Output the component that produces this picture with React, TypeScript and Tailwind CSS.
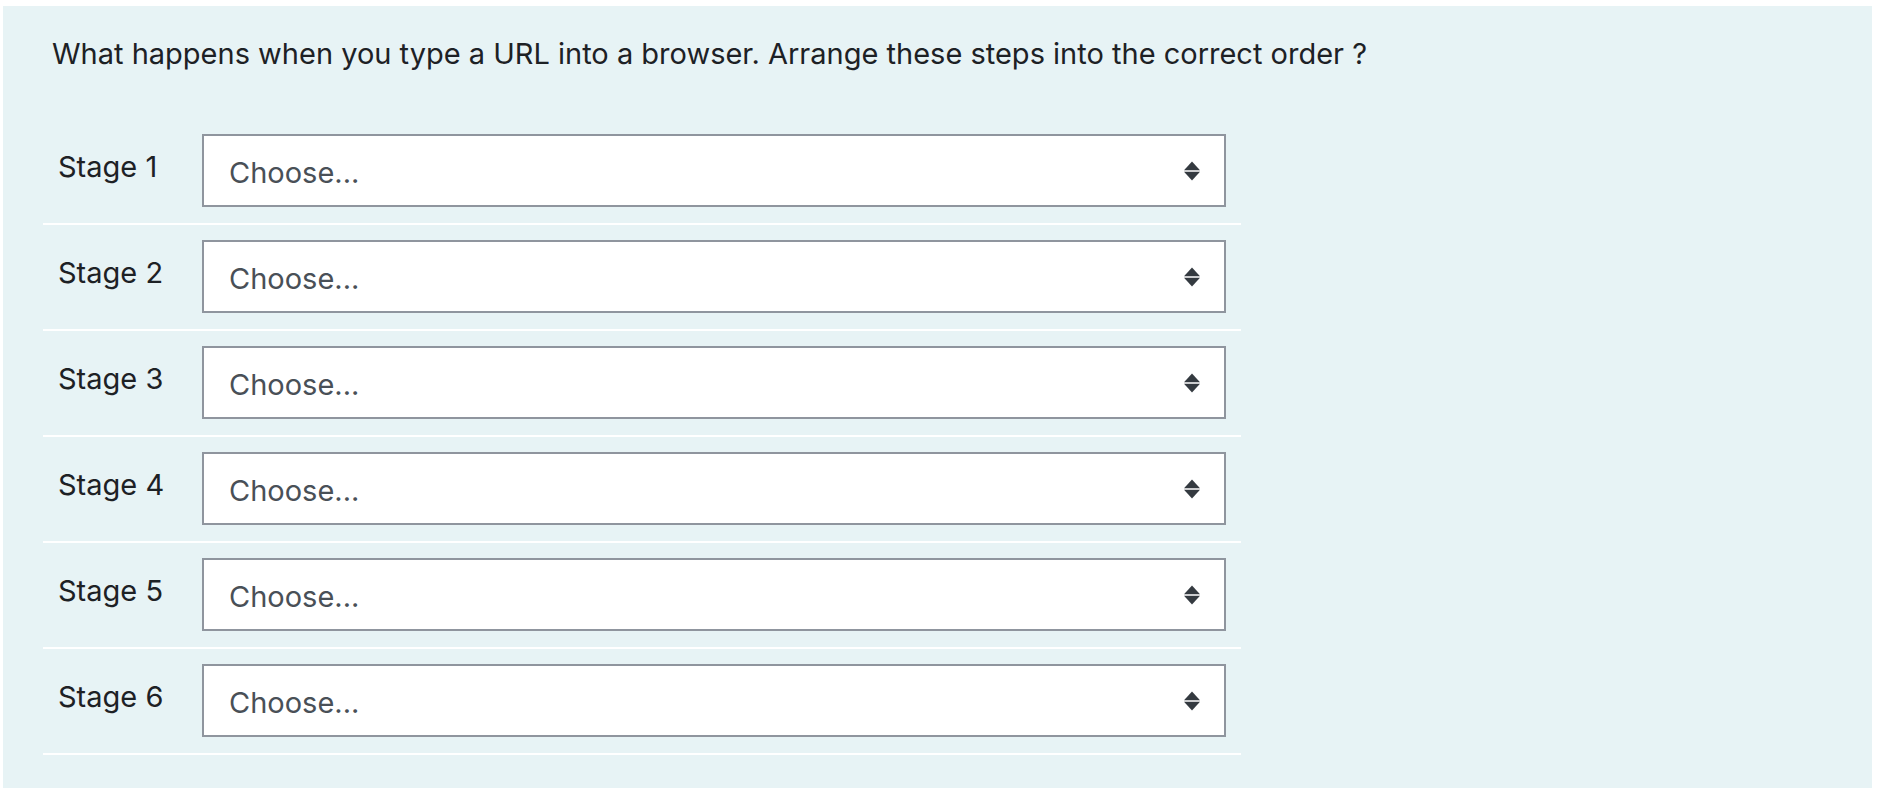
import React from "react";

const stages = [1, 2, 3, 4, 5, 6];

const SortIcon: React.FC = () => (
  <svg width="16" height="20" viewBox="0 0 16 20" className="shrink-0">
    <path d="M8 0.5 L16 9.2 L0 9.2 Z" fill="#343a40" />
    <path d="M0 10.8 L16 10.8 L8 19.5 Z" fill="#343a40" />
  </svg>
);

const StageRow: React.FC<{ n: number }> = ({ n }) => {
  return (
    <div className="flex border-b-2 border-white">
      <div className="w-[159px] shrink-0 pl-[15px] pt-[25px] text-[29px] leading-[45px] text-[#1d2125]">
        Stage {n}
      </div>
      <div className="pt-[15px] pb-[16px] pr-[15px]">
        <div className="flex h-[73px] w-[1024px] items-center justify-between border-2 border-[#8f959e] bg-white pl-[25px] pr-[24px]">
          <span className="pt-[4px] text-[29px] leading-[45px] text-[#495057]">Choose...</span>
          <SortIcon />
        </div>
      </div>
    </div>
  );
};

export default function App() {
  return (
    <div
      className="min-h-screen bg-white pl-[3px] pt-[6px]"
      style={{ fontFamily: "Inter, 'Noto Sans', sans-serif" }}
    >
      <div className="w-[1869px] bg-[#e7f3f5] px-[40px] pt-[25px] pb-[33px]">
        <p className="pl-[9px] text-[29px] leading-[45px] text-[#1d2125]">
          What happens when you type a URL into a browser. Arrange these steps into the correct order ?
        </p>
        <div className="mt-[43px] w-[1198px]">
          {stages.map((n) => (
            <StageRow key={n} n={n} />
          ))}
        </div>
      </div>
    </div>
  );
}
